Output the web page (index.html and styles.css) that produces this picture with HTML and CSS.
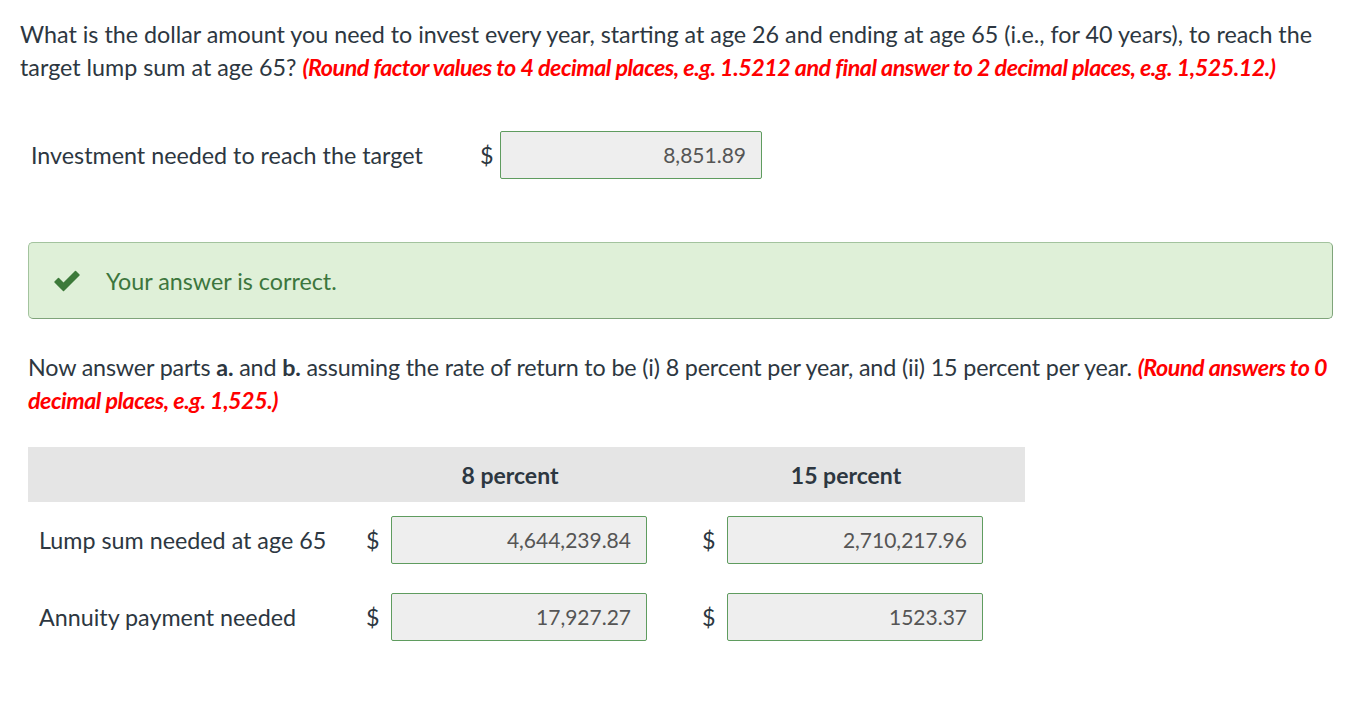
FILE: index.html
```html
<!DOCTYPE html>
<html lang="en">

<head>
    <meta charset="utf-8">
    <meta name="viewport" content="width=device-width, initial-scale=1.0">
    <title>Question</title>
    <link rel="stylesheet" href="styles.css">
</head>

<body>

    <p class="spoerg">What is the dollar amount you need to invest every year, starting at age 26 and ending at age 65 (i.e., for 40 years), to reach the target lump sum at age 65? <span class="hint">(Round factor values to 4 decimal places, e.g. 1.5212 and final answer to 2 decimal places, e.g. 1,525.12.)</span></p>

    <div class="linje">
        <span class="label">Investment needed to reach the target</span>
        <span class="dollar">$</span>
        <div class="felt">8,851.89</div>
    </div>

    <div class="korrekt">
        <svg class="flueben" width="28" height="22" viewBox="0 0 28 22">
            <path d="M2 12 L5.5 8.5 L10.5 13.5 L22.5 1.5 L26 5 L10.5 20.5 Z" fill="#3d7a3a" stroke="#3d7a3a" stroke-width="1.5" stroke-linejoin="round"/>
        </svg>
        <span>Your answer is correct.</span>
    </div>

    <p class="spoerg to">Now answer parts <b>a.</b> and <b>b.</b> assuming the rate of return to be (i) 8 percent per year, and (ii) 15 percent per year. <span class="hint">(Round answers to 0 decimal places, e.g. 1,525.)</span></p>

    <div class="tabel">
        <div class="hoved">
            <span class="kol1">8 percent</span>
            <span class="kol2">15 percent</span>
        </div>
        <div class="raekke">
            <span class="navn">Lump sum needed at age 65</span>
            <span class="dollar">$</span>
            <div class="felt">4,644,239.84</div>
            <span class="dollar">$</span>
            <div class="felt">2,710,217.96</div>
        </div>
        <div class="raekke">
            <span class="navn">Annuity payment needed</span>
            <span class="dollar">$</span>
            <div class="felt">17,927.27</div>
            <span class="dollar">$</span>
            <div class="felt">1523.37</div>
        </div>
    </div>

</body>

</html>
```

FILE: styles.css
```css
html {
    background-color: #ffffff;
}

body {
    margin: 0;
    padding: 18px 20px 0 20px;
    font-family: Lato, "Open Sans", sans-serif;
    font-size: 23.3px;
    color: #2d3741;
}

.spoerg {
    margin: 0;
    line-height: 33px;
}

.hint {
    color: #ff0000;
    font-weight: bold;
    font-style: italic;
    letter-spacing: -0.5px;
}

.linje {
    display: flex;
    align-items: center;
    margin-top: 47px;
    padding-left: 11px;
}

.linje .label {
    width: 449px;
}

.dollar {
    width: 20px;
}

.felt {
    width: 262px;
    height: 48px;
    box-sizing: border-box;
    border: 1px solid #5f9c5f;
    border-radius: 2px;
    background: #eeeeee;
    color: #555555;
    font-size: 21px;
    text-align: right;
    padding: 0 15px;
    line-height: 46px;
}

.korrekt {
    display: flex;
    align-items: center;
    margin: 63px 0 0 8px;
    width: 1305px;
    height: 77px;
    box-sizing: border-box;
    background: #dff0d8;
    border: 1px solid #a3c39e;
    border-right-color: #7fa47a;
    border-bottom-color: #7fa47a;
    border-radius: 5px;
    padding-left: 24px;
    color: #3c763d;
}

.flueben {
    margin-right: 25px;
}

.to {
    margin: 32px 0 0 8px;
    letter-spacing: -0.15px;
}

.tabel {
    margin: 30px 0 0 8px;
    width: 997px;
}

.hoved {
    display: grid;
    grid-template-columns: 352px 260px 76px 260px;
    align-items: center;
    height: 55px;
    background: #e5e5e5;
    font-weight: bold;
    font-size: 23px;
}

.hoved span {
    text-align: center;
}

.hoved .kol1 {
    grid-column: 2;
}

.hoved .kol2 {
    grid-column: 4;
}

.raekke {
    display: flex;
    align-items: center;
    margin-top: 14px;
    padding-left: 11px;
}

.raekke + .raekke {
    margin-top: 29px;
}

.raekke .navn {
    width: 327px;
}

.raekke .dollar {
    width: 25px;
}

.raekke .felt {
    width: 256px;
}

.raekke .felt + .dollar {
    margin-left: 55px;
}
```
